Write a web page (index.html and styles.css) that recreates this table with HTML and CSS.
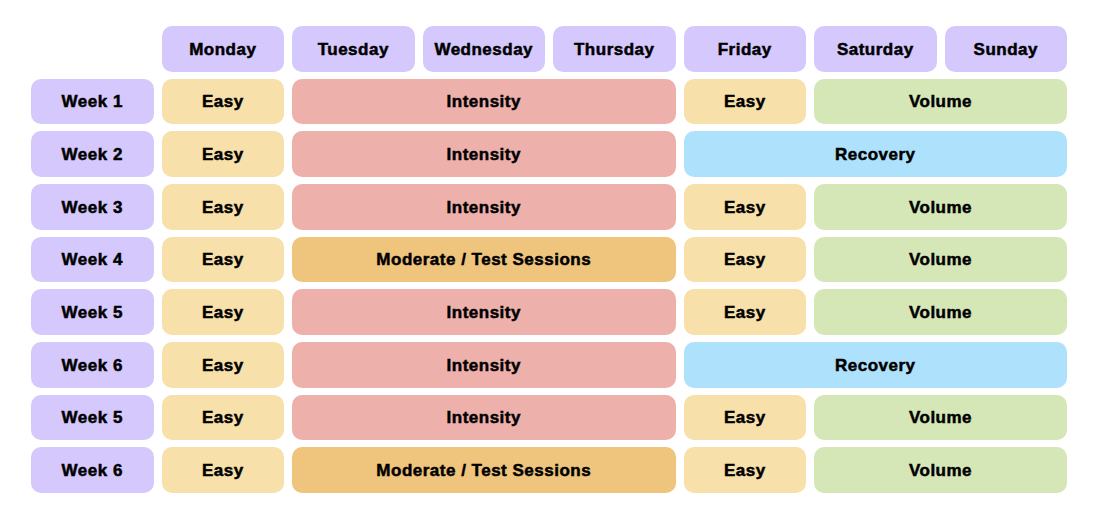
FILE: index.html
```html
<!DOCTYPE html>
<html>
<head>
<meta charset="utf-8">
<link rel="stylesheet" href="styles.css">
</head>
<body>
<div class="plan">
  <div class="blank"></div>
  <div class="cell head">Monday</div>
  <div class="cell head">Tuesday</div>
  <div class="cell head">Wednesday</div>
  <div class="cell head">Thursday</div>
  <div class="cell head">Friday</div>
  <div class="cell head">Saturday</div>
  <div class="cell head">Sunday</div>

  <div class="cell head">Week 1</div>
  <div class="cell easy">Easy</div>
  <div class="cell intensity span3">Intensity</div>
  <div class="cell easy">Easy</div>
  <div class="cell volume span2">Volume</div>

  <div class="cell head">Week 2</div>
  <div class="cell easy">Easy</div>
  <div class="cell intensity span3">Intensity</div>
  <div class="cell recovery span3">Recovery</div>

  <div class="cell head">Week 3</div>
  <div class="cell easy">Easy</div>
  <div class="cell intensity span3">Intensity</div>
  <div class="cell easy">Easy</div>
  <div class="cell volume span2">Volume</div>

  <div class="cell head">Week 4</div>
  <div class="cell easy">Easy</div>
  <div class="cell moderate span3">Moderate / Test Sessions</div>
  <div class="cell easy">Easy</div>
  <div class="cell volume span2">Volume</div>

  <div class="cell head">Week 5</div>
  <div class="cell easy">Easy</div>
  <div class="cell intensity span3">Intensity</div>
  <div class="cell easy">Easy</div>
  <div class="cell volume span2">Volume</div>

  <div class="cell head">Week 6</div>
  <div class="cell easy">Easy</div>
  <div class="cell intensity span3">Intensity</div>
  <div class="cell recovery span3">Recovery</div>

  <div class="cell head">Week 5</div>
  <div class="cell easy">Easy</div>
  <div class="cell intensity span3">Intensity</div>
  <div class="cell easy">Easy</div>
  <div class="cell volume span2">Volume</div>

  <div class="cell head">Week 6</div>
  <div class="cell easy">Easy</div>
  <div class="cell moderate span3">Moderate / Test Sessions</div>
  <div class="cell easy">Easy</div>
  <div class="cell volume span2">Volume</div>
</div>
</body>
</html>
```
FILE: styles.css
```css
html, body {
  margin: 0;
  padding: 0;
  background: #ffffff;
}
body {
  padding: 26px 0 0 31px;
  font-family: "Liberation Sans", Arial, sans-serif;
}
.plan {
  width: 1036px;
  height: 467px;
  display: grid;
  grid-template-columns: repeat(8, 1fr);
  grid-template-rows: repeat(9, 1fr);
  column-gap: 8px;
  row-gap: 7px;
}
.cell {
  border-radius: 10px;
  display: flex;
  align-items: center;
  justify-content: center;
  padding-top: 2px;
  box-sizing: border-box;
  font-weight: bold;
  font-size: 17px;
  letter-spacing: 0.5px;
  color: #000;
  -webkit-text-stroke: 0.5px #000;
}
.span2 { grid-column: span 2; }
.span3 { grid-column: span 3; }
.head { background: #d4c8fc; }
.easy { background: #f7e0a9; }
.intensity { background: #edb0ab; }
.moderate { background: #efc47c; }
.volume { background: #d5e7b7; }
.recovery { background: #aee2fc; }
```
